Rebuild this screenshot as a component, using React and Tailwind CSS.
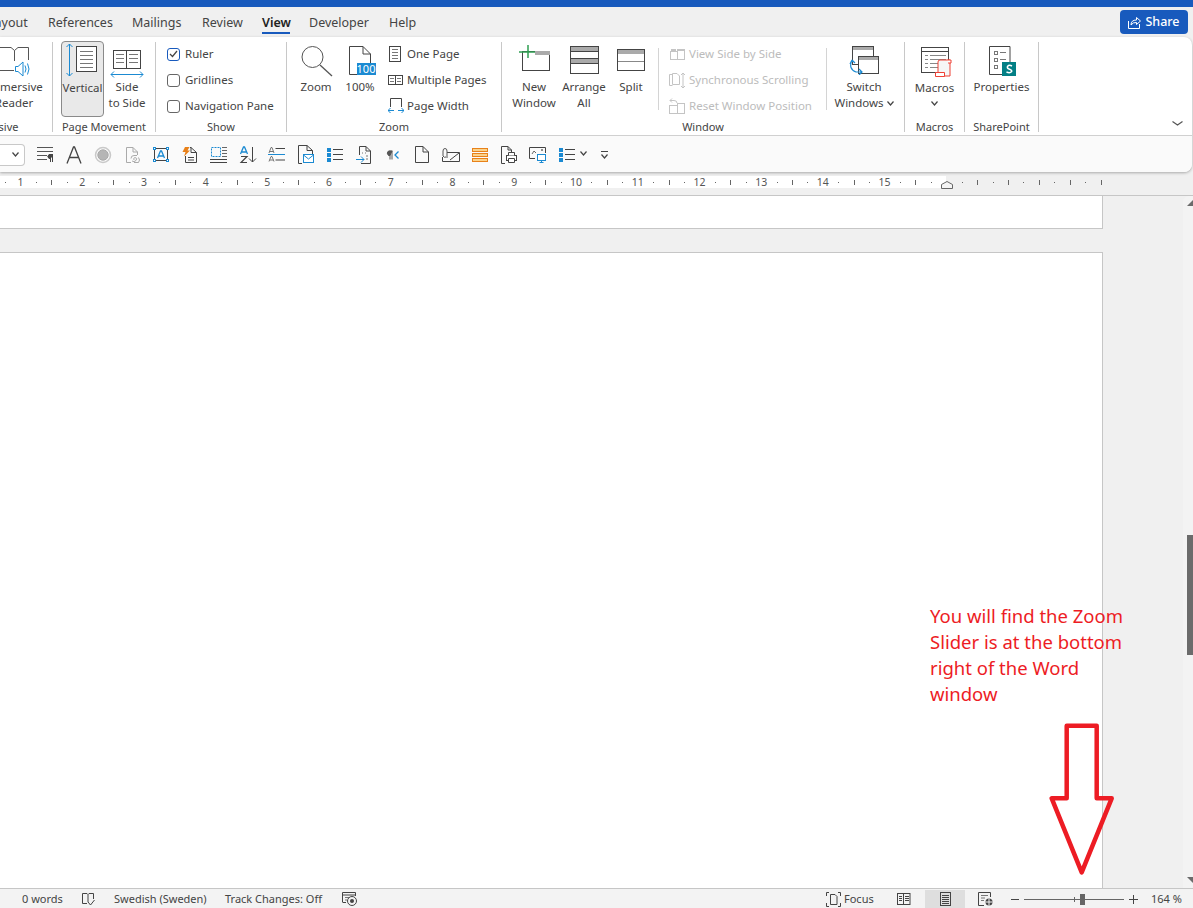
import React from "react";

const BLUE = "#1b8ad2";
const DARK = "#444444";
const GRAY = "#c4c4c4";

const Svg = ({ w, h, stroke = DARK, children }) => (
  <svg width={w} height={h} viewBox={`0 0 ${w} ${h}`} fill="none" stroke={stroke} strokeWidth="1" className="block shrink-0">
    {children}
  </svg>
);

const Lines = ({ x1, x2, ys, stroke = DARK }) =>
  ys.map((y) => <path key={y} d={`M${x1} ${y}H${x2}`} stroke={stroke} />);

/* ribbon icons */
const ImmersiveIcon = () => (
  <Svg w={33} h={30}>
    <path d="M0 .5H11L14.500 3.500L18 .5H28.500V13M14.500 3.500V14M0 23.500H14" stroke="#555" />
    <path d="M15.500 19.500H18L23 15V29L18 24.500H15.500Z" stroke={BLUE} fill="#fff" />
    <path d="M25 18.500Q27 22 25 25.500M27.500 16.500Q30.500 22 27.500 27.500" stroke={BLUE} />
  </Svg>
);
const VerticalIcon = () => (
  <Svg w={32} h={34}>
    <path d="M4.500 1V33M1.500 4L4.500 1L7.500 4M1.500 30L4.500 33L7.500 30" stroke={BLUE} />
    <rect x="11.500" y="3.500" width="20" height="25" fill="#fff" />
    <Lines x1={15} x2={28} ys={[8.5, 12.5, 16.5, 20.5, 24.5]} stroke="#777" />
  </Svg>
);
const SideIcon = () => (
  <Svg w={34} h={30}>
    <rect x="3.500" y="2.500" width="13" height="18" fill="#fff" />
    <rect x="16.500" y="2.500" width="14" height="18" fill="#fff" />
    <Lines x1={6} x2={14} ys={[6.5, 10.5, 14.5]} stroke="#777" />
    <Lines x1={19} x2={28} ys={[6.5, 10.500, 14.5]} stroke="#777" />
    <path d="M1 26.500H33M4 23.500L1 26.500L4 29.500M30 23.500L33 26.500L30 29.500" stroke={BLUE} />
  </Svg>
);
const ZoomIcon = () => (
  <Svg w={34} h={32}>
    <circle cx="13.500" cy="12" r="10.500" stroke="#555" />
    <path d="M21 20L33 31" stroke="#555" strokeWidth="1.300" />
  </Svg>
);
const Icon100 = () => (
  <div className="relative w-[30px] h-[30px]">
    <Svg w={22} h={29}>
      <path d="M.5 .5H14L21.500 8V28.500H.5Z" fill="#fff" />
      <path d="M14 .5V8H21.500" />
    </Svg>
    <span className="absolute left-[8px] top-[17px] w-[19px] h-[12px] bg-[#1b8ad2] text-white text-[11px] leading-[12px] text-center">100</span>
  </div>
);
const OnePageIcon = () => (
  <Svg w={14} h={16}>
    <rect x=".5" y=".5" width="11" height="15" />
    <Lines x1={3} x2={9} ys={[3.5, 6.5, 9.5, 12.5]} stroke="#777" />
  </Svg>
);
const MultiPagesIcon = () => (
  <Svg w={16} h={11}>
    <rect x=".5" y=".5" width="7" height="9" />
    <rect x="7.500" y=".5" width="7" height="9" />
    <Lines x1={2} x2={6} ys={[3.5, 6.5]} stroke="#777" />
    <Lines x1={9} x2={13} ys={[3.5, 6.5]} stroke="#777" />
  </Svg>
);
const PageWidthIcon = () => (
  <Svg w={16} h={16}>
    <path d="M2.500 9V.5H13.500V9" />
    <path d="M0 12.500H6M10 12.500H16M2.500 10L0 12.500L2.500 15M13.500 10L16 12.500L13.500 15" stroke={BLUE} />
  </Svg>
);
const NewWindowIcon = () => (
  <Svg w={31} h={27}>
    <rect x="3.500" y="6.500" width="27" height="19" fill="#fff" />
    <rect x="16" y="6" width="15" height="4" fill="#aaa" stroke="none" />
    <path d="M9 0V13M0 7H16" stroke="#2f9e52" strokeWidth="1.500" />
  </Svg>
);
const ArrangeIcon = () => (
  <Svg w={29} h={28}>
    <rect x=".5" y=".5" width="28" height="27" fill="#fff" />
    <rect x="1" y="1" width="27" height="4" fill="#aaa" stroke="none" />
    <rect x="1" y="13" width="27" height="4" fill="#aaa" stroke="none" />
    <path d="M1 12.500H28M1 17.500H28M1 5.500H28" />
  </Svg>
);
const SplitIcon = () => (
  <Svg w={29} h={22}>
    <rect x=".5" y=".5" width="27" height="21" fill="#fff" />
    <rect x="1" y="1" width="26" height="4" fill="#aaa" stroke="none" />
    <path d="M1 12.500H27" stroke="#888" />
  </Svg>
);
const SideBySideIcon = () => (
  <Svg w={17} h={12} stroke={GRAY}>
    <rect x="1.500" y="3.500" width="7" height="8" />
    <rect x="8.500" y="1.500" width="7" height="10" />
    <rect x="2" y="1" width="5" height="2" fill={GRAY} stroke="none" />
    <rect x="9" y="1" width="6" height="2" fill={GRAY} stroke="none" />
  </Svg>
);
const SyncIcon = () => (
  <Svg w={17} h={17} stroke={GRAY}>
    <path d="M3.500 2.500H.5V13.500H3.500" />
    <path d="M3.500 1.500H8L10.500 4V12.500H3.500Z" />
    <path d="M14 1V16M12 3L14 1L16 3M12 14L14 16L16 14" />
  </Svg>
);
const ResetIcon = () => (
  <Svg w={17} h={16} stroke={GRAY}>
    <rect x=".5" y="7.500" width="8" height="8" />
    <rect x="8.500" y="5.500" width="7" height="10" />
    <path d="M1 2.500H5Q8 2.500 8 5M3 .5L1 2.500L3 4.500" />
  </Svg>
);
const SwitchIcon = () => (
  <Svg w={30} h={29}>
    <rect x="3.500" y=".5" width="21" height="18" fill="#fff" />
    <rect x="4" y="1" width="20" height="3" fill="#aaa" stroke="none" />
    <rect x="9.500" y="10.500" width="20" height="17" fill="#fff" />
    <rect x="10" y="11" width="19" height="3" fill="#aaa" stroke="none" />
    <path d="M3 14Q-1 23 7 26H13M10 23L13 26L10 29M3 14L1 18M3 14L6 17" stroke={BLUE} strokeWidth="1.200" />
  </Svg>
);
const MacrosIcon = () => (
  <Svg w={31} h={30}>
    <rect x=".5" y=".5" width="27" height="25" fill="#fff" />
    <path d="M1 4.500H27" />
    <Lines x1={9} x2={25} ys={[8.5, 12.5]} stroke="#888" />
    <Lines x1={4} x2={7} ys={[8.5, 12.5, 16.5, 20.5]} stroke="#888" />
    <Lines x1={9} x2={17} ys={[16.5, 20.5]} stroke="#888" />
    <path d="M17 26V15Q17 13 19 13H29V29H15" stroke="#ee4035" fill="#f6f6f6" />
    <path d="M26.500 13H30V16H27M14.500 25.500H23.500V29.500H14.500Z" stroke="#ee4035" fill="#fff" />
  </Svg>
);
const PropertiesIcon = () => (
  <Svg w={28} h={30}>
    <path d="M.5 .5H21V16M14 28.500H.5V.5" />
    <rect x="5.500" y="5.500" width="3" height="3" stroke="#777" />
    <rect x="5.500" y="12.500" width="3" height="3" stroke="#777" />
    <rect x="5.500" y="19.500" width="3" height="3" stroke="#777" />
    <Lines x1={11} x2={17} ys={[6.5, 13.5]} stroke="#777" />
    <rect x="13" y="16" width="14" height="14" fill="#037f85" stroke="none" />
    <path d="M23 20Q20 18.500 18.500 20.500Q18 22.500 20 23Q23 24 22.700 25.500Q21 27.500 17.500 26" stroke="#fff" strokeWidth="1.500" />
  </Svg>
);

/* quick access icons */
const qatIcons = [
  <Svg w={18} h={17}>
    <Lines x1={1} x2={17} ys={[1.5, 5.5]} stroke="#555" />
    <Lines x1={1} x2={11} ys={[9.5, 13.5]} stroke="#555" />
    <path d="M16.500 8V16M14.500 8V16" stroke="#444" />
    <path d="M16.500 8.500H13Q10.500 10.500 13 12.500H14.500Z" fill="#444" stroke="#444" />
  </Svg>,
  <Svg w={16} h={18}>
    <path d="M1 17.500L7.500 1H8.500L15 17.500M3.500 11.500H12.500" stroke="#444" strokeWidth="1.300" />
  </Svg>,
  <Svg w={18} h={18}>
    <circle cx="9" cy="9" r="7.500" stroke="#c9c9c9" strokeWidth="1.500" />
    <circle cx="9" cy="9" r="5.200" fill="#b5b5b5" stroke="#a9a9a9" />
  </Svg>,
  <Svg w={18} h={18} stroke="#aaa">
    <path d="M8 16.500H3.500V1.500H10L14.500 6V9" />
    <path d="M10 1.500V6H14.500" />
    <path d="M8 12.500Q8 9.500 11 9.500H14M9 15Q11 16.500 13 14.500Q15 12 12 11.500Q10 12 11 14M15.500 11.500Q17.500 14 15.500 16.500H11" />
  </Svg>,
  <Svg w={16} h={15}>
    <rect x="1.500" y="1.500" width="13" height="12" stroke="#444" />
    <path d="M4.500 11L7.500 4H8.500L11.500 11M5.500 9H10.500" stroke={BLUE} strokeWidth="1.300" />
    {[[0, 0], [13, 0], [0, 12], [13, 12]].map(([x, y]) => (
      <rect key={`${x}${y}`} x={x + 0.5} y={y + 0.5} width="2" height="2" fill="#fff" stroke={BLUE} />
    ))}
  </Svg>,
  <Svg w={16} h={18}>
    <path d="M8 1.500H9L14.500 6.500V16.500H3.500V10" />
    <path d="M9 1.500V6.500H14.500M6 11.500H12M6 14H12" />
    <path d="M3 1H7.500L5.500 4.500H8L2 10.500L3.500 6H.5Z" fill="#e8811a" stroke="none" />
  </Svg>,
  <Svg w={18} h={17}>
    <rect x="1.500" y="1.500" width="9" height="9" stroke={BLUE} strokeDasharray="2 1" />
    <Lines x1={12} x2={17} ys={[1.5, 4.5, 7.5, 10.5]} stroke="#666" />
    <Lines x1={0} x2={17} ys={[13.5, 16.5]} stroke="#444" />
  </Svg>,
  <Svg w={18} h={17}>
    <path d="M1.500 8L4.500 1H5.500L8.500 8M2.500 6H7.500" stroke={BLUE} strokeWidth="1.300" />
    <path d="M2 10.500H8L2 16.500H8" stroke="#444" strokeWidth="1.200" />
    <path d="M13.500 1V16M10 12.500L13.500 16L17 12.500" stroke="#444" />
  </Svg>,
  <Svg w={18} h={17}>
    <path d="M1 7L3 1.500H4L6 7M1.500 5.500H5.500" stroke="#777" />
    <path d="M1 15.500L3 10.500H4L6 15.500M1.500 14H5.500" stroke="#777" />
    <path d="M7.500 2.500H17M7.500 14H17" stroke="#444" />
    <path d="M0 8.500H17" stroke={BLUE} />
  </Svg>,
  <Svg w={16} h={19}>
    <path d="M.5 18.500V.5H9L14.500 5.500V9M9 .5V5.500H14.500M.5 18.500H4" />
    <rect x="5.500" y="9.500" width="10" height="8" fill="#fff" stroke={BLUE} />
    <path d="M5.500 10L10.500 14L15.500 10" stroke={BLUE} />
  </Svg>,
  <Svg w={16} h={14}>
    <rect x="0" y="0" width="4" height="4" fill={BLUE} stroke="none" />
    <rect x="0" y="5" width="4" height="4" fill={BLUE} stroke="none" />
    <rect x="0" y="10" width="4" height="4" fill={BLUE} stroke="none" />
    <Lines x1={6} x2={16} ys={[1.5, 6.5, 11.5]} />
  </Svg>,
  <Svg w={16} h={18}>
    <path d="M3.500 9V.5H10L14.500 5V17.500H5" />
    <path d="M10 .5V5H14.500" />
    <path d="M0 13.500H8M5 10.500L8 13.500L5 16.500" stroke={BLUE} />
    <path d="M6 7H7M9 7H10M10 10H12M10 13H12" stroke="#777" />
  </Svg>,
  <Svg w={14} h={10}>
    <path d="M6 .5V9.500M4 .5V9.500" stroke="#555" />
    <path d="M6 1H2.500Q0 3 2.500 5.500H4Z" fill="#555" stroke="#555" />
    <path d="M12.500 1.500L9 5L12.500 8.500" stroke={BLUE} strokeWidth="1.300" />
  </Svg>,
  <Svg w={14} h={17}>
    <path d="M.5 .5H8L13.500 6V16.500H.5Z" />
    <path d="M8 .5V6H13.500" />
  </Svg>,
  <Svg w={18} h={14}>
    <path d="M5 4.500H17.500V13.500H.5V9" />
    <path d="M8 12L17 5" />
    <path d="M5 10V3Q5 .5 3 .5Q1 .5 1 3V8Q2 10 4 9" stroke="#555" />
  </Svg>,
  <Svg w={17} h={14}>
    {[0, 5, 10].map((y) => (
      <rect key={y} x="1.500" y={y + 0.5} width="15" height="3" fill="#fbd38a" stroke="#e8811a" />
    ))}
  </Svg>,
  <Svg w={16} h={18}>
    <path d="M.5 17.500V.5H7L10.500 4V6M7 .5V4H10.500M.5 17.500H4" />
    <rect x="5.500" y="9.500" width="10" height="5" fill="#fff" />
    <path d="M7.500 9.500V6.500H13.500V9.500M7.500 12.500H13.500V16.500H7.500Z" fill="#fff" />
  </Svg>,
  <Svg w={17} h={16}>
    <path d="M.5 11.500V.5H16.500V6" />
    <path d="M.5 11.500H6" />
    <path d="M3 7L5 4L7 6" stroke="#666" />
    <circle cx="13" cy="3" r="1" fill="#666" stroke="none" />
    <rect x="8.500" y="7.500" width="8" height="6" fill="#fff" stroke={BLUE} />
    <path d="M12.500 13.500V15.500M10.500 15.500H14.500" stroke={BLUE} />
  </Svg>,
  <Svg w={16} h={14}>
    <rect x="0" y="0" width="4" height="4" fill={BLUE} stroke="none" />
    <rect x="0" y="5" width="4" height="4" fill={BLUE} stroke="none" />
    <rect x="0" y="10" width="4" height="4" fill={BLUE} stroke="none" />
    <Lines x1={6} x2={16} ys={[1.5, 6.5, 11.5]} />
  </Svg>,
];

const Chevron = ({ w = 7, stroke = "#444" }) => (
  <Svg w={w} h={5} stroke={stroke}>
    <path d={`M.5 .5L${w / 2} 4L${w - 0.5} .5`} strokeWidth="1.200" />
  </Svg>
);

/* layout pieces */
const Group = ({ label, className, labelClass = "text-center", children }) => (
  <div className={`flex flex-col h-[90px] shrink-0 border-r border-[#c8c8c8] ${className}`}>
    <div className="flex flex-1 min-h-0">{children}</div>
    <div className={`h-[15px] mb-[-3px] text-[11px] leading-[14px] text-[#444] whitespace-nowrap ${labelClass}`}>{label}</div>
  </div>
);

const Big = ({ icon, lines, className, iconClass = "items-end pb-[4px]" }) => (
  <div className={`flex flex-col items-center shrink-0 ${className}`}>
    <div className={`flex h-[37px] ${iconClass}`}>{icon}</div>
    {lines.map((l) => (
      <div key={l} className="text-[11.500px] leading-[16px] text-[#444] whitespace-nowrap">{l}</div>
    ))}
  </div>
);

const Small = ({ icon, label, disabled }) => (
  <div className="flex items-center h-[26px]">
    <div className="flex justify-center items-center w-[17px] mr-[3px]">{icon}</div>
    <span className={`text-[11.500px] whitespace-nowrap ${disabled ? "text-[#bcbcbc]" : "text-[#444]"}`}>{label}</span>
  </div>
);

const Check = ({ label, checked }) => (
  <div className="flex items-center h-[26px]">
    <div className={`flex items-center justify-center w-[13px] h-[13px] rounded-[3px] border mr-[5px] ${checked ? "border-[#185abd]" : "border-[#666]"}`}>
      {checked && (
        <Svg w={9} h={8}>
          <path d="M1 4L3.500 6.500L8 1" strokeWidth="1.200" />
        </Svg>
      )}
    </div>
    <span className="text-[11.500px] text-[#444] whitespace-nowrap">{label}</span>
  </div>
);

const Ruler = () => {
  const marks = [];
  for (let k = -1; k <= 70; k++) {
    const x = 20.5 + 15.43 * k;
    if (k === 60) continue;
    if (k % 4 === 0 && k <= 56) {
      marks.push(
        <text key={k} x={x} y={186} textAnchor="middle" fontSize="10.500" fill="#555" stroke="none" fontFamily="Noto Sans, sans-serif">
          {k / 4 + 1}
        </text>
      );
    } else if (k % 2 === 0) {
      marks.push(<path key={k} d={`M${Math.round(x) + 0.5} 180V185`} stroke="#666" />);
    } else {
      marks.push(<path key={k} d={`M${Math.round(x) + 0.5} 182V183`} stroke="#666" />);
    }
  }
  return (
    <div className="h-[24px] border-b border-[#c6c6c6] shrink-0">
      <svg width="1193" height="23" viewBox="0 172 1193 23" className="block" fill="none">
        <rect x="0" y="176" width="946" height="12" fill="#fff" />
        {marks}
        <path d="M941.500 188.500V184.500L947 181.500L952.500 184.500V188.500Z" fill="#f4f4f4" stroke="#666" />
      </svg>
    </div>
  );
};

const Arrow = () => (
  <svg width="70" height="156" viewBox="0 0 70 156" className="absolute left-[1047px] top-[527px]" fill="none">
    <path d="M19.700 2.700H49.700V75.300H64.700L34.700 149.300L4.700 75.300H19.700Z" stroke="#ed1c24" strokeWidth="4.500" strokeLinejoin="round" />
  </svg>
);

export default function App() {
  return (
    <div className="relative flex flex-col w-[1193px] h-[908px] overflow-hidden bg-[#f0f0f0] font-['Noto_Sans',sans-serif] text-[#444]">
      <div className="h-[7px] bg-[#185abd] shrink-0" />

      {/* tabs */}
      <div className="flex items-start h-[30px] shrink-0">
        <div className="flex ml-[-12px] pt-[7px] text-[12.500px] leading-[18px] gap-[20px] text-[#444]">
          <span className="w-[40px]">Layout</span>
          <span className="w-[64px]">References</span>
          <span className="w-[50px]">Mailings</span>
          <span className="w-[40px]">Review</span>
          <div className="flex flex-col w-[27px] font-semibold text-[#222]">
            View
            <div className="h-[2px] bg-[#185abd] mt-[0px] w-[28px]" />
          </div>
          <span className="w-[60px]">Developer</span>
          <span>Help</span>
        </div>
        <div className="flex items-center justify-center gap-[4px] ml-auto mr-[5px] mt-[3px] w-[68px] h-[24px] bg-[#185abd] rounded-[4px] text-white text-[12.500px] font-medium">
          <Svg w={13} h={13} stroke="#fff">
            <path d="M.5 5V12.500H11.500V8" />
            <path d="M3 9Q3 4 8.500 4V1.500L12.500 5L8.500 8.500V6.500Q5 6 3 9Z" />
          </Svg>
          Share
        </div>
      </div>

      {/* ribbon */}
      <div className="flex flex-col mr-[1px] h-[135px] shrink-0 bg-white rounded-r-[8px] shadow-[0_1px_3px_rgba(0,0,0,0.3)]">
        <div className="flex h-[99px] shrink-0 pt-[5px] border-b border-[#d0d0d0]">
          <Group label="Immersive" className="w-[53px]" labelClass="ml-[-40px] w-[62px] text-center">
            <div className="w-[52px] overflow-hidden">
              <Big
                className="ml-[-14px] w-[56px]"
                icon={<div className="ml-[5px]"><ImmersiveIcon /></div>}
                iconClass="items-start pt-[5px]"
                lines={["Immersive", "Reader"]}
              />
            </div>
          </Group>

          <Group label="Page Movement" className="w-[103px]">
            <div className="flex ml-[8px] mt-[-1px] w-[43px] h-[76px] shrink-0 justify-center bg-[#e9e9e9] border border-[#8a8a8a] rounded-[4px]">
              <div className="flex flex-col items-center">
                <div className="flex h-[37px] items-start pt-[1px] ml-[-4px]"><VerticalIcon /></div>
                <div className="text-[11.500px] leading-[16px] mt-[1px] text-[#444]">Vertical</div>
              </div>
            </div>
            <Big className="w-[46px]" icon={<SideIcon />} iconClass="items-start pt-[6px]" lines={["Side", "to Side"]} />
          </Group>

          <Group label="Show" className="w-[131px]">
            <div className="flex flex-col ml-[11px] mt-[-1px]">
              <Check label="Ruler" checked />
              <Check label="Gridlines" />
              <Check label="Navigation Pane" />
            </div>
          </Group>

          <Group label="Zoom" className="w-[215px]">
            <Big className="ml-[6px] w-[46px]" icon={<ZoomIcon />} iconClass="items-start pt-[3px]" lines={["Zoom"]} />
            <Big className="w-[41px] pl-[1px]" icon={<Icon100 />} iconClass="items-start pt-[4px] pl-[7px]" lines={["100%"]} />
            <div className="flex flex-col ml-[7px] mt-[-1px]">
              <Small icon={<OnePageIcon />} label="One Page" />
              <Small icon={<MultiPagesIcon />} label="Multiple Pages" />
              <Small icon={<PageWidthIcon />} label="Page Width" />
            </div>
          </Group>

          <Group label="Window" className="w-[403px]">
            <Big className="ml-[7px] w-[50px]" icon={<NewWindowIcon />} iconClass="items-start pt-[3px] pl-[1px]" lines={["New", "Window"]} />
            <Big className="w-[50px]" icon={<ArrangeIcon />} iconClass="items-start pt-[4px]" lines={["Arrange", "All"]} />
            <Big className="w-[44px]" icon={<SplitIcon />} iconClass="items-start pt-[7px]" lines={["Split"]} />
            <div className="w-px h-[62px] ml-[5px] mt-[6px] bg-[#d4d4d4]" />
            <div className="flex flex-col w-[157px] ml-[10px] mt-[-1px]">
              <Small disabled icon={<SideBySideIcon />} label="View Side by Side" />
              <Small disabled icon={<SyncIcon />} label="Synchronous Scrolling" />
              <Small disabled icon={<ResetIcon />} label="Reset Window Position" />
            </div>
            <div className="w-px h-[62px] mt-[6px] bg-[#d4d4d4]" />
            <div className="flex flex-col items-center ml-[7px] w-[60px]">
              <div className="flex h-[37px] items-start pt-[4px]"><SwitchIcon /></div>
              <div className="text-[11.500px] leading-[16px] text-[#444]">Switch</div>
              <div className="flex items-center gap-[3px] text-[11.500px] leading-[16px] text-[#444] whitespace-nowrap">
                Windows
                <Chevron />
              </div>
            </div>
          </Group>

          <Group label="Macros" className="w-[60px]">
            <div className="flex flex-col items-center w-full">
              <div className="flex h-[37px] items-start pt-[5px] pl-[3px]"><MacrosIcon /></div>
              <div className="text-[11.500px] leading-[16px] mt-[1px] text-[#444]">Macros</div>
              <div className="mt-[5px]"><Chevron /></div>
            </div>
          </Group>

          <Group label="SharePoint" className="w-[74px]">
            <Big className="w-full" icon={<PropertiesIcon />} iconClass="items-start pt-[4px] pl-[2px]" lines={["Properties"]} />
          </Group>

          <div className="self-end ml-auto mr-[9px] mb-[9px]">
            <Chevron w={11} stroke="#555" />
          </div>
        </div>

        {/* quick access toolbar */}
        <div className="flex items-center flex-1 pt-[1px] bg-[#fafafa] rounded-br-[8px]">
          <div className="flex items-center justify-end pr-[5px] w-[25px] h-[22px] shrink-0 bg-white border border-l-0 border-[#c8c8c8] rounded-r-[4px]">
            <Chevron />
          </div>
          <div className="flex items-center ml-[5px]">
            {qatIcons.map((icon, i) => (
              <div key={i} className="flex items-center justify-center w-[29px] h-[20px]">{icon}</div>
            ))}
          </div>
          <div className="ml-[-1px] mb-[2px]"><Chevron /></div>
          <div className="flex flex-col items-center gap-[2px] ml-[14px]">
            <div className="w-[7px] h-px bg-[#444]" />
            <Chevron />
          </div>
        </div>
      </div>

      <Ruler />

      {/* document area */}
      <div className="relative flex flex-1 min-h-0">
        <div className="flex flex-col w-[1103px] shrink-0">
          <div className="h-[33px] bg-white border-r border-b border-[#c6c6c6]" />
          <div className="flex-1 mt-[23px] bg-white border-r border-t border-[#c6c6c6]" />
        </div>
        <div className="flex flex-col items-end w-[10px] ml-auto bg-[#f3f3f3] rounded-tl-[6px]">
          <div className="h-[6px] mt-[4px] w-[6px] [clip-path:polygon(100%_0,100%_100%,0_100%)] bg-[#6b6b6b]" />
          <div className="w-[6px] h-[120px] mt-[329px] bg-[#6b6b6b]" />
          <div className="mt-auto mb-[5px] w-[6px] h-[6px] [clip-path:polygon(0_0,100%_0,100%_100%)] bg-[#6b6b6b]" />
        </div>

        <div className="absolute left-[930px] top-[407px] w-[200px] text-[18.500px] leading-[26px] text-[#ed1c24]">
          You will find the Zoom Slider is at the bottom right of the Word window
        </div>
        <Arrow />
      </div>

      {/* status bar */}
      <div className="flex items-center h-[20px] pt-[1px] shrink-0 bg-[#f3f3f3] border-t border-[#c6c6c6] text-[11px] text-[#444] whitespace-nowrap">
        <span className="ml-[22px] w-[59px]">0 words</span>
        <Svg w={14} h={13}>
          <path d="M1.500 .5H6L7 1.500L8 .5H12.500V6M7 1.500V9M1.500 .5V10.500H6" />
          <path d="M7 9L9.500 12L13.500 7" stroke="#444" />
        </Svg>
        <span className="ml-[19px] w-[111px]">Swedish (Sweden)</span>
        <span className="w-[117px]">Track Changes: Off</span>
        <Svg w={15} h={14}>
          <path d="M.5 10V.5H13.500V4M.5 3H13.500M.5 10.500H4" />
          <path d="M3 5.500H7M3 8H5" stroke="#777" />
          <circle cx="10" cy="9" r="4.500" />
          <circle cx="10" cy="9" r="2" fill="#444" stroke="none" />
        </Svg>
        <div className="flex items-center ml-auto">
          <Svg w={15} h={15}>
            <path d="M.5 4V.5H3M12 .5H14.500V4M.5 11V14.500H3M12 14.500H14.500V11" />
            <path d="M4.500 2.500H9L11 4.500V12.500H4.500Z" />
          </Svg>
          <span className="ml-[3px] w-[53px]">Focus</span>
          <Svg w={14} h={12}>
            <rect x=".5" y=".5" width="6" height="11" />
            <rect x="6.500" y=".5" width="6.500" height="11" />
            <Lines x1={2} x2={5} ys={[3.5, 5.5, 7.5]} />
            <Lines x1={8} x2={12} ys={[3.5, 5.5, 7.5]} />
          </Svg>
          <div className="flex items-center justify-center w-[40px] h-[19px] ml-[14px] bg-[#dedede]">
            <Svg w={11} h={14}>
              <rect x=".5" y=".5" width="10" height="13" />
              <Lines x1={2} x2={9} ys={[3.5, 5.5, 7.5, 9.5, 11.5]} />
            </Svg>
          </div>
          <div className="ml-[13px]">
            <Svg w={15} h={14}>
              <path d="M.5 13.500V.5H12.500V5M.5 13.500H6" />
              <path d="M3 3.500H10M3 6H7M3 8.500H6" stroke="#777" />
              <circle cx="11" cy="10" r="3.500" fill="#444" stroke="none" />
              <path d="M7.500 10H14.500M11 6.500V13.500" stroke="#f3f3f3" />
            </Svg>
          </div>
          <div className="w-[8px] h-px bg-[#444] ml-[18px]" />
          <div className="relative w-[100px] h-px bg-[#666] ml-[5px]">
            <div className="absolute left-[50px] top-[-2px] w-px h-[5px] bg-[#666]" />
            <div className="absolute left-[56px] top-[-5px] w-[5px] h-[11px] bg-[#666]" />
          </div>
          <div className="ml-[5px]">
            <Svg w={9} h={9}>
              <path d="M0 4.500H9" />
              <path d="M4.500 0V9" />
            </Svg>
          </div>
          <span className="ml-[13px] mr-[11px] w-[31px]">164 %</span>
        </div>
      </div>
    </div>
  );
}
